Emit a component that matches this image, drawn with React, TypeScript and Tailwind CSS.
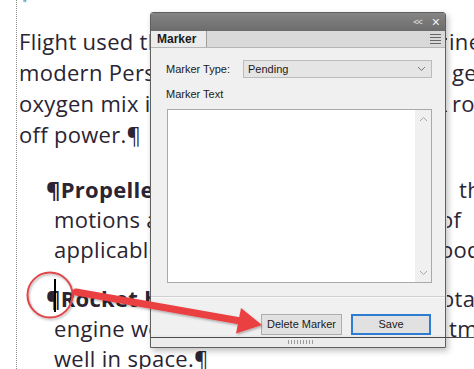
import React from "react";

type LineProps = {
  left: React.ReactNode;
  right?: React.ReactNode;
  h31?: boolean;
};

function Line({ left, right, h31 }: LineProps) {
  return (
    <div className={`flex items-center whitespace-nowrap ${h31 ? "h-[31px]" : "h-[30px]"}`}>
      <div className="flex-1 overflow-hidden">{left}</div>
      <div className="w-[27px] shrink-0 overflow-hidden">{right}</div>
    </div>
  );
}

function Dialog() {
  return (
    <div className="absolute left-[150px] top-[12px] flex h-[336px] w-[296px] flex-col overflow-hidden rounded-t-[3px] border border-[#5f5f5f] bg-[#f0f0f0] font-['Liberation_Sans',Arial,sans-serif] text-[#1a1a1a] shadow-[2px_3px_6px_rgba(0,0,0,0.25)]">
      {/* title bar */}
      <div className="flex h-[18px] shrink-0 items-center justify-end gap-[10px] bg-gradient-to-b from-[#858585] to-[#6c6c6c] pr-[5px]">
        <span className="text-[9px] leading-none tracking-[-1px] text-[#e4e4e4]">&lt;&lt;</span>
        <span className="text-[14px] leading-none text-[#f2f2f2]">×</span>
      </div>
      {/* tab row */}
      <div className="flex h-[17px] shrink-0 items-stretch border-b border-[#b5b5b5] bg-[#d9d9d9]">
        <div className="flex w-[56px] items-center border-r border-[#a0a0a0] bg-[#ebebeb] pl-[6px] text-[12px] font-bold leading-none">
          Marker
        </div>
        <div className="flex-1" />
        <div className="flex w-[16px] flex-col items-center justify-center gap-[2px] pr-[4px]">
          <div className="h-[1px] w-[11px] bg-[#666]" />
          <div className="h-[1px] w-[11px] bg-[#666]" />
          <div className="h-[1px] w-[11px] bg-[#666]" />
          <div className="h-[1px] w-[11px] bg-[#666]" />
        </div>
      </div>
      {/* body */}
      <div className="flex flex-1 flex-col">
        <div className="flex flex-col pl-[15px] pr-[13px] pt-[12px]">
          <div className="flex h-[18px] items-center">
            <div className="w-[77px] text-[11px] leading-none">Marker Type:</div>
            <div className="flex h-[18px] flex-1 items-center justify-between border border-[#bcbcbc] bg-[#e5e5e5] pl-[4px] pr-[5px]">
              <span className="text-[11px] leading-none">Pending</span>
              <svg width="9" height="6" viewBox="0 0 9 6">
                <path d="M1 1 L4.5 4.5 L8 1" fill="none" stroke="#777" strokeWidth="1" />
              </svg>
            </div>
          </div>
          <div className="mt-[10px] h-[12px] text-[11px] leading-[12px]">Marker Text</div>
          <div className="ml-[1px] mt-[9px] flex h-[174px] border border-[#a9a9a9] bg-white">
            <div className="flex-1" />
            <div className="flex w-[16px] flex-col items-center justify-between bg-[#f0f0f0] py-[6px]">
              <svg width="9" height="6" viewBox="0 0 9 6">
                <path d="M1 5 L4.5 1.5 L8 5" fill="none" stroke="#a6a6a6" strokeWidth="1" />
              </svg>
              <svg width="9" height="6" viewBox="0 0 9 6">
                <path d="M1 1 L4.5 4.5 L8 1" fill="none" stroke="#a6a6a6" strokeWidth="1" />
              </svg>
            </div>
          </div>
        </div>
        <div className="mt-[13px] h-[1px] bg-[#cfcfcf]" />
        <div className="h-[1px] bg-[#fafafa]" />
        <div className="mt-[16px] flex justify-end gap-[9px] pr-[14px]">
          <div className="flex h-[21px] w-[81px] items-center justify-center border border-[#adadad] bg-[#e1e1e1] text-[11px] leading-none">
            Delete Marker
          </div>
          <div className="flex h-[21px] w-[80px] items-center justify-center border-2 border-[#2f7cd3] bg-[#e1e1e1] text-[11px] leading-none">
            Save
          </div>
        </div>
        <div className="flex flex-1 items-center justify-center bg-[#ececec]">
          <div className="mt-[2px] flex gap-[2px] pl-[4px]">
            {Array.from({ length: 9 }).map((_, i) => (
              <div key={i} className="h-[4px] w-[1px] bg-[#9a9a9a]" />
            ))}
          </div>
        </div>
      </div>
    </div>
  );
}

export default function App() {
  return (
    <div className="relative h-[369px] w-[474px] overflow-hidden bg-white font-['Open_Sans',sans-serif]">
      <div className="ml-[16px] h-full border-l border-dotted border-[#8c8c8c] pl-[2px] text-[22px] tracking-[0.3px] text-[#2a2433]">
        <div className="h-[26px] pl-[4px] text-[9px] leading-[8px] text-[#444]">"</div>
        <div>
          <Line h31 left="Flight used the same kind of rocket engine" right={<span className="ml-[2px]">ine</span>} />
          <Line h31 left="modern Persian designs use, with a hydrogen" right={<span className="ml-[5px]">ge</span>} />
          <Line h31 left="oxygen mix in a closed chamber to produce thrust and ro" right={<span className="ml-[5px]">ro</span>} />
          <Line h31 left="off power.¶" />
        </div>
        <div className="mt-[24px]">
          <Line
            left={
              <span className="pl-[27px] font-bold">
                ¶Propeller: <span className="font-normal">the rotor designs for the</span>
              </span>
            }
            right={<span className="ml-[12px]">th</span>}
          />
          <Line left={<span className="pl-[35px]">motions are transferred by means of</span>} right={<span className="-ml-[7px]">of</span>} />
          <Line left={<span className="pl-[35px]">applicable only in atmosphere with good</span>} right={<span className="-ml-[7px]">ood</span>} />
        </div>
        <div className="mt-[19px]">
          <Line
            left={
              <span className="pl-[27px] font-bold">
                ¶Rocket hull: <span className="font-normal">a rotating</span>
              </span>
            }
            right={<span className="-ml-[6px]">ota</span>}
          />
          <Line left={<span className="pl-[35px]">engine works in the atm</span>} right={<span className="ml-[2px]">tm</span>} />
          <Line left={<span className="pl-[35px]">well in space.¶</span>} />
        </div>
      </div>

      <Dialog />

      {/* horizontal frame line crossing the dialog bottom */}
      <div className="absolute left-[150px] top-[337px] h-[1px] w-[324px] bg-[#4a4a4a]" />

      {/* cursor over pilcrow */}
      <div className="absolute left-[54px] top-[279px] h-[33px] w-[2px] bg-black" />

      {/* annotations */}
      <svg className="absolute left-0 top-0" width="474" height="369" viewBox="0 0 474 369">
        <defs>
          <filter id="sh" x="-20%" y="-20%" width="140%" height="140%">
            <feDropShadow dx="1" dy="1.5" stdDeviation="1.2" floodColor="#000" floodOpacity="0.3" />
          </filter>
        </defs>
        <circle cx="50" cy="295" r="22.5" fill="none" stroke="#e0474a" strokeWidth="2" filter="url(#sh)" />
        <g filter="url(#sh)">
          <line x1="76" y1="292" x2="239" y2="320.8" stroke="#ea3f42" strokeWidth="7" strokeLinecap="round" />
          <polygon points="262,325 236,333.5 241,308" fill="#ea3f42" />
        </g>
      </svg>
    </div>
  );
}
